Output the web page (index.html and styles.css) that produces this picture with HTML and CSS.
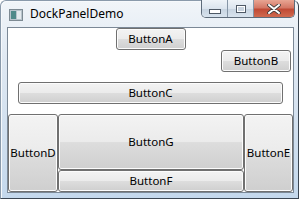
FILE: index.html
```html
<!DOCTYPE html>
<html lang="en">
<head>
    <meta charset="UTF-8">
    <title>DockPanelDemo</title>
    <link rel="stylesheet" href="styles.css">
</head>
<body>
<div class="window">
    <div class="titlebar">
        <svg class="app-icon" width="14" height="12" viewBox="0 0 14 12">
            <rect x="0.5" y="0.5" width="13" height="11" fill="#b8c4cc" stroke="#7d8a93"/>
            <rect x="2" y="2" width="5" height="8" fill="#4f8a8a"/>
            <rect x="8" y="2" width="4" height="8" fill="#e4eaee"/>
        </svg>
        <span class="title">DockPanelDemo</span>
        <div class="caption-btns">
            <div class="cap min"><span class="min-glyph"></span></div>
            <div class="cap max"><span class="max-glyph"></span></div>
            <div class="cap close">
                <svg width="14" height="10" viewBox="0 0 14 10">
                    <path d="M2 1 L12 9 M12 1 L2 9" stroke="#3a3a3a" stroke-width="3.6" stroke-linecap="round"/>
                    <path d="M2 1 L12 9 M12 1 L2 9" stroke="#fff" stroke-width="2" stroke-linecap="round"/>
                </svg>
            </div>
        </div>
    </div>
    <div class="client">
        <div class="dock-top center"><button class="btn w70">ButtonA</button></div>
        <div class="dock-top right"><button class="btn w70">ButtonB</button></div>
        <div class="dock-top spaced"><button class="btn wide">ButtonC</button></div>
        <div class="dock-rest">
            <button class="btn side">ButtonD</button>
            <div class="middle">
                <button class="btn fill">ButtonG</button>
                <button class="btn bottom">ButtonF</button>
            </div>
            <button class="btn side narrow">ButtonE</button>
        </div>
    </div>
</div>
</body>
</html>
```

FILE: styles.css
```css
body {
  margin: 0;
  width: 304px;
  height: 204px;
  background: #ffffff;
  font-family: 'Noto Sans', 'Open Sans', sans-serif;
  overflow: hidden;
}
.window {
  width: 299px;
  height: 199px;
  box-sizing: border-box;
  border: 1px solid #8a9aab;
  border-right-color: #3b4652;
  border-bottom-color: #3b4652;
  border-radius: 6px 6px 0 0;
  background: linear-gradient(to bottom, #f1f5f9 0%, #dfe8f2 30%, #c4d8ec 100%);
  box-shadow: inset 1px 1px 0 #f6f9fc;
  display: flex;
  flex-direction: column;
}
.titlebar {
  height: 26px;
  display: flex;
  align-items: flex-start;
  position: relative;
}
.app-icon {
  margin: 8px 0 0 8px;
}
.title {
  font-size: 12px;
  color: #000;
  margin: 5px 0 0 7px;
  line-height: 16px;
}
.caption-btns {
  position: absolute;
  top: -1px;
  left: 200px;
  display: flex;
  height: 17px;
  border: 1px solid #5d6b7a;
  border-top: none;
  border-radius: 0 0 5px 5px;
  overflow: hidden;
}
.cap {
  height: 17px;
  display: flex;
  align-items: center;
  justify-content: center;
}
.min, .max {
  width: 25px;
  background: linear-gradient(to bottom, #eef3f8 0%, #dbe4ee 50%, #c6d3e0 51%, #d8e3ee 100%);
  border-right: 1px solid #8595a6;
}
.min-glyph {
  width: 10px;
  height: 3px;
  margin-top: 5px;
  background: #fff;
  border: 1px solid #4e5966;
}
.max-glyph {
  width: 8px;
  height: 6px;
  border: 1px solid #4e5966;
  box-shadow: inset 0 0 0 1px #fff;
  background: #c8d3df;
}
.close {
  width: 40px;
  background: linear-gradient(to bottom, #e8a593 0%, #d47866 45%, #c04a35 55%, #d06a4f 100%);
}
.client {
  margin-left: 6px;
  width: 287px;
  height: 166px;
  box-sizing: border-box;
  border: 1px solid #7b8896;
  background: #ffffff;
  display: flex;
  flex-direction: column;
}
.dock-top {
  display: flex;
  height: 22px;
}
.dock-top.center {
  justify-content: center;
}
.dock-top.right {
  justify-content: flex-end;
  padding-right: 2px;
}
.dock-top.spaced {
  margin: 10px;
}
.dock-rest {
  flex: 1;
  display: flex;
}
.middle {
  flex: 1;
  display: flex;
  flex-direction: column;
}
.btn {
  font-family: 'Noto Sans', 'Open Sans', sans-serif;
  font-size: 11.5px;
  color: #000;
  margin: 0;
  padding: 0 1px;
  box-sizing: border-box;
  border: 1px solid #707070;
  border-radius: 3px;
  background: linear-gradient(to bottom, #f3f3f3 0%, #ebebeb 50%, #dddddd 51%, #cfcfcf 100%);
  box-shadow: inset 0 0 0 1px #fcfcfc;
  height: 22px;
  line-height: 18px;
}
.w70 {
  width: 70px;
}
.wide {
  width: 100%;
}
.side {
  height: 100%;
  width: 50px;
}
.side.narrow {
  width: 49px;
}
.fill {
  flex: 1;
  height: auto;
  width: 100%;
}
.bottom {
  width: 100%;
}
```
